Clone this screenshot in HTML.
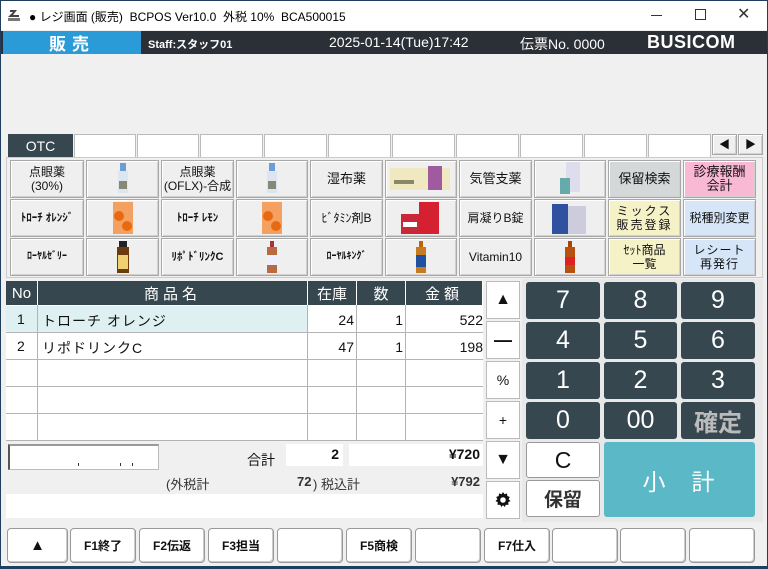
<!DOCTYPE html>
<html><head><meta charset="utf-8">
<style>
*{box-sizing:border-box;margin:0;padding:0}
body{width:768px;height:569px;overflow:hidden;background:#f0f0f0;font-family:"Liberation Sans","Noto Sans CJK JP",sans-serif;position:relative;color:#111}
.a{position:absolute}
.c{display:flex;align-items:center;justify-content:center;text-align:center}
.btn{position:absolute;background:#efefef;border:1px solid #a8a8a8;box-shadow:inset 1px 1px 0 #fff,inset -1px -1px 0 #d0d0d0;display:flex;align-items:center;justify-content:center;text-align:center;font-size:12px;line-height:14px}
.tab{position:absolute;top:134px;height:23px;background:#fff;border:1px solid #bbb;border-bottom:none}
.th{position:absolute;top:281px;height:24px;background:#37474f;color:#fff;font-size:15px;display:flex;align-items:center;justify-content:center;border-right:1px solid #fff}
.hl{position:absolute;left:6px;width:477px;height:1px;background:#b4b4b4}
.vl{position:absolute;top:305px;height:136px;width:1px;background:#b4b4b4}
.td{position:absolute;font-size:14px}
.sb{position:absolute;left:486px;width:34px;background:#fff;border:1px solid #bbb;display:flex;align-items:center;justify-content:center;font-size:14px}
.k{position:absolute;background:#37474f;color:#fff;border-radius:3px;font-size:25px;display:flex;align-items:center;justify-content:center}
.fk{position:absolute;top:528px;height:35px;background:#fff;border:1px solid #999;border-radius:4px;box-shadow:inset -1px -1px 0 #ccc;font-size:12px;font-weight:bold;display:flex;align-items:center;justify-content:center}
</style></head><body>
<!-- window border -->
<div class="a" style="left:0;top:0;width:768px;height:569px;border:1px solid #1f3f5f;border-bottom:3px solid #1f3f5f"></div>
<!-- title bar -->
<div class="a" style="left:1px;top:1px;width:766px;height:29px;background:#fff"></div>
<svg class="a" style="left:7px;top:8px" width="14" height="14"><path d="M3 2h7l-4 5h6v2H1l5-5H3z" fill="#444"/><rect x="1" y="10" width="12" height="3" fill="#777"/></svg>
<div class="a" style="left:29px;top:8px;font-size:12px;color:#000;white-space:nowrap">● レジ画面 (販売)&nbsp; BCPOS Ver10.0&nbsp; 外税 10%&nbsp; BCA500015</div>
<div class="a" style="left:651px;top:15px;width:11px;height:1px;background:#333"></div>
<div class="a" style="left:695px;top:9px;width:11px;height:11px;border:1px solid #333"></div>
<div class="a" style="left:737px;top:4px;font-size:16px;color:#333">✕</div>
<!-- header -->
<div class="a" style="left:1px;top:31px;width:766px;height:23px;background:#2b2f36"></div>
<div class="a c" style="left:3px;top:31px;width:138px;height:23px;background:#2b9bd8;color:#fff;font-size:17px;letter-spacing:6px;font-weight:bold">販売</div>
<div class="a" style="left:148px;top:36px;color:#fff;font-size:11px;font-weight:bold">Staff:スタッフ01</div>
<div class="a" style="left:329px;top:34px;color:#fff;font-size:14px">2025-01-14(Tue)17:42</div>
<div class="a" style="left:520px;top:34px;color:#fff;font-size:14px">伝票No. 0000</div>
<div class="a" style="left:647px;top:32px;color:#fff;font-size:18px;font-weight:bold;letter-spacing:0.5px">BUSICOM</div>
<!-- tabs -->
<div class="a c" style="left:8px;top:134px;width:65px;height:23px;background:#37474f;color:#fff;font-size:14px">OTC</div>
<div class="tab" style="left:74px;width:62px"></div>
<div class="tab" style="left:137px;width:62px"></div>
<div class="tab" style="left:200px;width:63px"></div>
<div class="tab" style="left:264px;width:63px"></div>
<div class="tab" style="left:328px;width:63px"></div>
<div class="tab" style="left:392px;width:63px"></div>
<div class="tab" style="left:456px;width:63px"></div>
<div class="tab" style="left:520px;width:63px"></div>
<div class="tab" style="left:584px;width:63px"></div>
<div class="tab" style="left:648px;width:63px"></div>
<div class="btn" style="left:712px;top:134px;width:25px;height:21px;font-size:11px">◀</div>
<div class="btn" style="left:738px;top:134px;width:25px;height:21px;font-size:11px">▶</div>
<div class="a" style="left:6px;top:157px;width:757px;height:121px;background:#f0f0f0;border:1px solid #ccc"></div>
<!-- grid row1 -->
<div class="btn" style="left:10px;top:160px;width:74px;height:38px">点眼薬<br>(30%)</div>
<div class="btn" style="left:86px;top:160px;width:73px;height:38px"><svg width="14" height="32"><rect x="4" y="0" width="6" height="8" fill="#6b9ed8"/><rect x="2" y="8" width="10" height="22" fill="#dde6f0"/><rect x="3" y="18" width="8" height="8" fill="#887"/></svg></div>
<div class="btn" style="left:161px;top:160px;width:73px;height:38px">点眼薬<br>(OFLX)-合成</div>
<div class="btn" style="left:236px;top:160px;width:72px;height:38px"><svg width="14" height="32"><rect x="4" y="0" width="6" height="8" fill="#6b9ed8"/><rect x="2" y="8" width="10" height="22" fill="#dde6f0"/><rect x="3" y="18" width="8" height="8" fill="#887"/></svg></div>
<div class="btn" style="left:310px;top:160px;width:73px;height:38px;font-size:13px">湿布薬</div>
<div class="btn" style="left:385px;top:160px;width:72px;height:38px"><svg width="62" height="26"><rect x="0" y="2" width="60" height="22" fill="#f0e8c0"/><rect x="38" y="0" width="14" height="24" fill="#a05aa0"/><rect x="4" y="14" width="20" height="4" fill="#886"/></svg></div>
<div class="btn" style="left:459px;top:160px;width:73px;height:38px;font-size:13px">気管支薬</div>
<div class="btn" style="left:534px;top:160px;width:72px;height:38px"><svg width="24" height="34"><rect x="8" y="0" width="14" height="30" fill="#dde" /><rect x="2" y="16" width="10" height="16" fill="#6aa"/></svg></div>
<div class="btn" style="left:608px;top:160px;width:73px;height:38px;background:#d4d8d8;font-size:13px">保留検索</div>
<div class="btn" style="left:683px;top:160px;width:73px;height:38px;background:#f9b8d4;font-size:13px">診療報酬<br>会計</div>
<!-- row2 -->
<div class="btn" style="left:10px;top:199px;width:74px;height:38px;font-weight:bold;font-size:11px">ﾄﾛｰﾁ ｵﾚﾝｼﾞ</div>
<div class="btn" style="left:86px;top:199px;width:73px;height:38px"><svg width="24" height="32"><rect x="2" y="0" width="20" height="32" fill="#f3a060"/><circle cx="8" cy="14" r="5" fill="#e86a10"/><circle cx="16" cy="24" r="5" fill="#e86a10"/></svg></div>
<div class="btn" style="left:161px;top:199px;width:73px;height:38px;font-weight:bold;font-size:11px">ﾄﾛｰﾁ ﾚﾓﾝ</div>
<div class="btn" style="left:236px;top:199px;width:72px;height:38px"><svg width="24" height="32"><rect x="2" y="0" width="20" height="32" fill="#f3a060"/><circle cx="8" cy="14" r="5" fill="#e86a10"/><circle cx="16" cy="24" r="5" fill="#e86a10"/></svg></div>
<div class="btn" style="left:310px;top:199px;width:73px;height:38px;font-size:12px">ﾋﾞﾀﾐﾝ剤B</div>
<div class="btn" style="left:385px;top:199px;width:72px;height:38px"><svg width="44" height="32"><rect x="20" y="0" width="20" height="32" fill="#d42030"/><rect x="2" y="12" width="18" height="20" fill="#c82838"/><rect x="4" y="20" width="14" height="5" fill="#fff"/></svg></div>
<div class="btn" style="left:459px;top:199px;width:73px;height:38px;font-size:12px">肩凝りB錠</div>
<div class="btn" style="left:534px;top:199px;width:72px;height:38px"><svg width="40" height="32"><rect x="2" y="2" width="16" height="30" fill="#3050a0"/><rect x="18" y="4" width="18" height="28" fill="#ccd"/></svg></div>
<div class="btn" style="left:608px;top:199px;width:73px;height:38px;background:#f6f2c8;font-size:12px;letter-spacing:2px">ミックス<br>販売登録</div>
<div class="btn" style="left:683px;top:199px;width:73px;height:38px;background:#d6e6f8;font-size:12px">税種別変更</div>
<!-- row3 -->
<div class="btn" style="left:10px;top:238px;width:74px;height:38px;font-weight:bold;font-size:10px">ﾛｰﾔﾙｾﾞﾘｰ</div>
<div class="btn" style="left:86px;top:238px;width:73px;height:38px"><svg width="14" height="32"><rect x="3" y="0" width="8" height="6" fill="#222"/><rect x="1" y="6" width="12" height="26" fill="#6b3c10"/><rect x="2" y="14" width="10" height="14" fill="#f0d070"/></svg></div>
<div class="btn" style="left:161px;top:238px;width:73px;height:38px;font-weight:bold;font-size:11px">ﾘﾎﾟﾄﾞﾘﾝｸC</div>
<div class="btn" style="left:236px;top:238px;width:72px;height:38px"><svg width="14" height="32"><rect x="5" y="0" width="4" height="6" fill="#a33"/><rect x="2" y="6" width="10" height="26" fill="#b86a40"/><rect x="2" y="14" width="10" height="10" fill="#eef"/></svg></div>
<div class="btn" style="left:310px;top:238px;width:73px;height:38px;font-weight:bold;font-size:10px">ﾛｰﾔﾙｷﾝｸﾞ</div>
<div class="btn" style="left:385px;top:238px;width:72px;height:38px"><svg width="14" height="32"><rect x="5" y="0" width="4" height="6" fill="#b60"/><rect x="2" y="6" width="10" height="26" fill="#c87a20"/><rect x="2" y="14" width="10" height="12" fill="#2050a0"/></svg></div>
<div class="btn" style="left:459px;top:238px;width:73px;height:38px;font-size:12px">Vitamin10</div>
<div class="btn" style="left:534px;top:238px;width:72px;height:38px"><svg width="14" height="32"><rect x="5" y="0" width="4" height="6" fill="#a40"/><rect x="2" y="6" width="10" height="26" fill="#b85010"/><rect x="2" y="16" width="10" height="8" fill="#d22"/></svg></div>
<div class="btn" style="left:608px;top:238px;width:73px;height:38px;background:#f6f2c8;font-size:12px">ｾｯﾄ商品<br>一覧</div>
<div class="btn" style="left:683px;top:238px;width:73px;height:38px;background:#d6e6f8;font-size:12px;letter-spacing:1px">レシート<br>再発行</div>
<!-- table -->
<div class="a" style="left:6px;top:305px;width:477px;height:136px;background:#fff"></div>
<div class="a" style="left:6px;top:306px;width:301px;height:26px;background:#def0f2"></div>
<div class="th" style="left:6px;width:32px">No</div>
<div class="th" style="left:38px;width:270px;letter-spacing:4px">商品名</div>
<div class="th" style="left:308px;width:49px">在庫</div>
<div class="th" style="left:357px;width:49px">数</div>
<div class="th" style="left:406px;width:77px;letter-spacing:4px">金額</div>
<div class="hl" style="top:332px"></div><div class="hl" style="top:359px"></div><div class="hl" style="top:386px"></div><div class="hl" style="top:413px"></div><div class="hl" style="top:440px"></div>
<div class="vl" style="left:37px"></div><div class="vl" style="left:307px"></div><div class="vl" style="left:356px"></div><div class="vl" style="left:405px"></div>
<div class="td" style="left:17px;top:311px">1</div>
<div class="td" style="left:42px;top:311px;letter-spacing:1px">トローチ オレンジ</div>
<div class="td" style="left:308px;top:312px;width:46px;text-align:right">24</div>
<div class="td" style="left:357px;top:312px;width:46px;text-align:right">1</div>
<div class="td" style="left:406px;top:312px;width:77px;text-align:right">522</div>
<div class="td" style="left:17px;top:338px">2</div>
<div class="td" style="left:42px;top:338px;letter-spacing:1px">リポドリンクC</div>
<div class="td" style="left:308px;top:339px;width:46px;text-align:right">47</div>
<div class="td" style="left:357px;top:339px;width:46px;text-align:right">1</div>
<div class="td" style="left:406px;top:339px;width:77px;text-align:right">198</div>
<!-- side buttons -->
<div class="sb" style="top:281px;height:38px;font-size:16px">▲</div>
<div class="sb" style="top:321px;height:38px;font-size:18px;font-weight:bold">—</div>
<div class="sb" style="top:361px;height:38px">%</div>
<div class="sb" style="top:401px;height:38px">+</div>
<div class="sb" style="top:441px;height:38px;font-size:16px">▼</div>
<div class="sb" style="top:481px;height:38px"><svg width="16" height="16" viewBox="0 0 16 16"><path d="M8 0l1.5 2.2 2.5-.8.3 2.6 2.5 1L13.6 7.3 15.5 9l-2.3 1.3.3 2.6-2.6-.2L9.6 15 8 13.1 6.4 15l-1.3-2.3-2.6.2.3-2.6L.5 9l1.9-1.7L1.2 5l2.5-1 .3-2.6 2.5.8z" fill="#111"/><circle cx="8" cy="8" r="2.8" fill="#fff"/></svg></div>
<!-- keypad -->
<div class="a" style="left:522px;top:279px;width:241px;height:243px;background:#e8e8e8"></div>
<div class="k" style="left:526px;top:282px;width:74px;height:37px">7</div>
<div class="k" style="left:604px;top:282px;width:73px;height:37px">8</div>
<div class="k" style="left:681px;top:282px;width:74px;height:37px">9</div>
<div class="k" style="left:526px;top:322px;width:74px;height:37px">4</div>
<div class="k" style="left:604px;top:322px;width:73px;height:37px">5</div>
<div class="k" style="left:681px;top:322px;width:74px;height:37px">6</div>
<div class="k" style="left:526px;top:362px;width:74px;height:37px">1</div>
<div class="k" style="left:604px;top:362px;width:73px;height:37px">2</div>
<div class="k" style="left:681px;top:362px;width:74px;height:37px">3</div>
<div class="k" style="left:526px;top:402px;width:74px;height:37px">0</div>
<div class="k" style="left:604px;top:402px;width:73px;height:37px">00</div>
<div class="k" style="left:681px;top:402px;width:74px;height:37px;color:#bbb;font-size:24px;font-weight:bold">確定</div>
<div class="a c" style="left:526px;top:442px;width:74px;height:36px;background:#fff;border:1px solid #999;border-radius:3px;font-size:23px">C</div>
<div class="a c" style="left:526px;top:480px;width:74px;height:37px;background:#fff;border:1px solid #999;border-radius:3px;font-size:19px;font-weight:bold;color:#333">保留</div>
<div class="a c" style="left:604px;top:442px;width:151px;height:75px;background:#5bb8c6;border-radius:3px;color:#fff;font-size:23px;letter-spacing:26px;padding-left:24px">小計</div>
<!-- totals -->
<div class="a" style="left:8px;top:444px;width:151px;height:26px;background:#fff;border:1px solid #bbb;border-left:2px solid #555;border-top:2px solid #999"></div>
<div class="a" style="left:78px;top:463px;width:1px;height:3px;background:#333"></div>
<div class="a" style="left:120px;top:463px;width:1px;height:3px;background:#333"></div>
<div class="a" style="left:132px;top:463px;width:1px;height:3px;background:#333"></div>
<div class="a" style="left:247px;top:450px;font-size:14px">合計</div>
<div class="a" style="left:286px;top:444px;width:57px;height:22px;background:#fff;font-size:14px;font-weight:bold;text-align:right;padding:2px 4px">2</div>
<div class="a" style="left:349px;top:444px;width:134px;height:22px;background:#fff;font-size:14px;font-weight:bold;text-align:right;padding:2px 3px">¥720</div>
<div class="a" style="left:166px;top:474px;font-size:13px;color:#333">(外税計</div>
<div class="a" style="left:297px;top:474px;font-size:13px;font-weight:bold;color:#333">72</div>
<div class="a" style="left:313px;top:474px;font-size:13px;color:#333">) 税込計</div>
<div class="a" style="left:400px;top:474px;width:80px;text-align:right;font-size:13px;font-weight:bold;color:#333">¥792</div>
<div class="a" style="left:6px;top:494px;width:477px;height:24px;background:#fff"></div>
<!-- function keys -->
<div class="fk" style="left:7px;width:61px;font-size:15px">▲</div>
<div class="fk" style="left:70px;width:66px">F1終了</div>
<div class="fk" style="left:139px;width:66px">F2伝返</div>
<div class="fk" style="left:208px;width:66px">F3担当</div>
<div class="fk" style="left:277px;width:66px"></div>
<div class="fk" style="left:346px;width:66px">F5商検</div>
<div class="fk" style="left:415px;width:66px"></div>
<div class="fk" style="left:484px;width:66px">F7仕入</div>
<div class="fk" style="left:552px;width:66px"></div>
<div class="fk" style="left:620px;width:66px"></div>
<div class="fk" style="left:689px;width:66px"></div>
</body></html>
